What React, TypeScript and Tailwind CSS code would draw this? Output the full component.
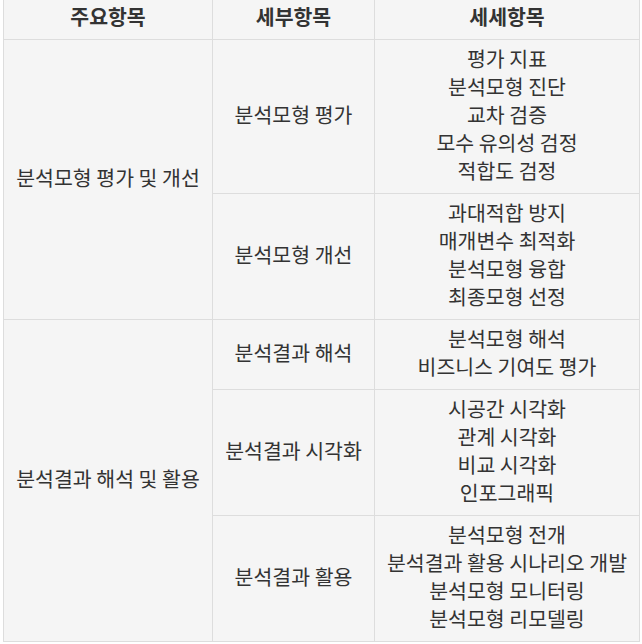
import React from 'react';

interface SubItem {
    name: string;
    details: string[];
}

interface MainItem {
    name: string;
    subs: SubItem[];
}

const rows: MainItem[] = [
    {
        name: '분석모형 평가 및 개선',
        subs: [
            {
                name: '분석모형 평가',
                details: ['평가 지표', '분석모형 진단', '교차 검증', '모수 유의성 검정', '적합도 검정'],
            },
            {
                name: '분석모형 개선',
                details: ['과대적합 방지', '매개변수 최적화', '분석모형 융합', '최종모형 선정'],
            },
        ],
    },
    {
        name: '분석결과 해석 및 활용',
        subs: [
            {
                name: '분석결과 해석',
                details: ['분석모형 해석', '비즈니스 기여도 평가'],
            },
            {
                name: '분석결과 시각화',
                details: ['시공간 시각화', '관계 시각화', '비교 시각화', '인포그래픽'],
            },
            {
                name: '분석결과 활용',
                details: ['분석모형 전개', '분석결과 활용 시나리오 개발', '분석모형 모니터링', '분석모형 리모델링'],
            },
        ],
    },
];

const cell = 'border border-[#dddddd] bg-[#f5f5f5] px-1 pt-[4px] pb-[9px] text-center align-middle';

export default function App() {
    return (
        <div
            className="min-h-screen bg-white text-[#333333] text-[20.5px] leading-[28px]"
            style={{ fontFamily: '"Noto Sans CJK KR", "Noto Sans", sans-serif' }}
        >
            <table className="ml-[3px] mt-[-3px] w-[637px] table-fixed border-collapse">
                <colgroup>
                    <col className="w-[209px]" />
                    <col className="w-[162px]" />
                    <col />
                </colgroup>
                <thead>
                    <tr>
                        <th className={`${cell} font-bold`}>주요항목</th>
                        <th className={`${cell} font-bold`}>세부항목</th>
                        <th className={`${cell} font-bold`}>세세항목</th>
                    </tr>
                </thead>
                <tbody>
                    {rows.map((main) =>
                        main.subs.map((sub, i) => (
                            <tr key={sub.name}>
                                {i === 0 && (
                                    <td className={cell} rowSpan={main.subs.length}>
                                        {main.name}
                                    </td>
                                )}
                                <td className={cell}>{sub.name}</td>
                                <td className={cell}>
                                    {sub.details.map((d) => (
                                        <div key={d}>{d}</div>
                                    ))}
                                </td>
                            </tr>
                        ))
                    )}
                </tbody>
            </table>
        </div>
    );
}
